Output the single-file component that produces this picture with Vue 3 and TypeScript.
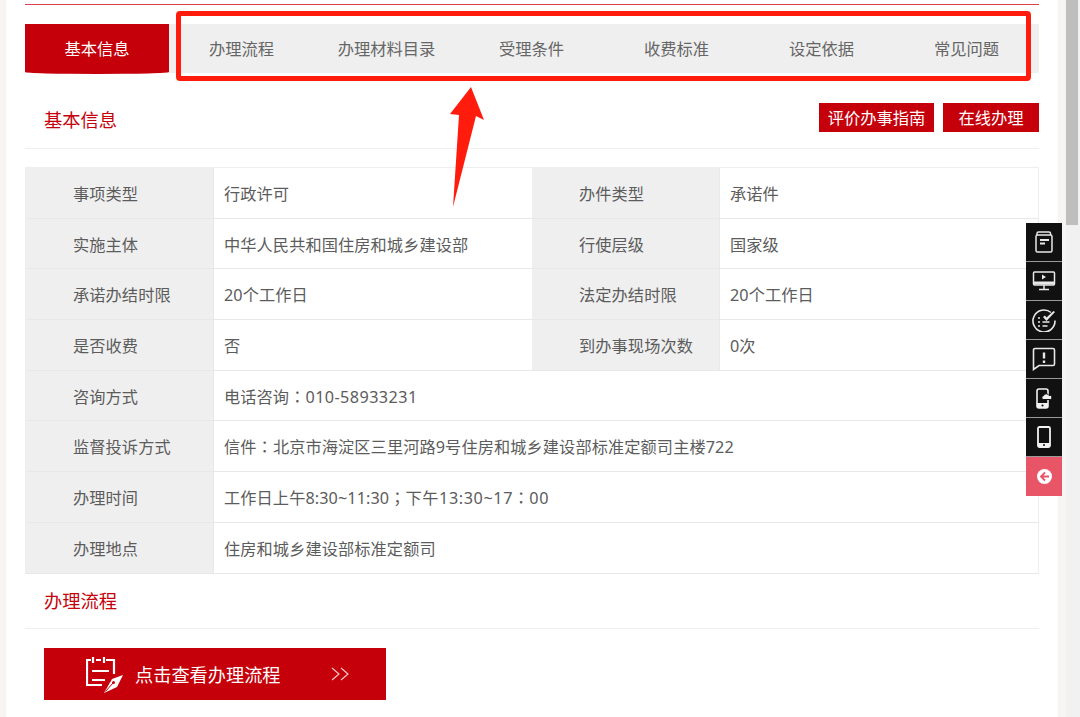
<script setup lang="ts">
const tabs = ['办理流程', '办理材料目录', '受理条件', '收费标准', '设定依据', '常见问题']

interface Row {
  label: string
  value: string
  label2?: string
  value2?: string
}

const rows: Row[] = [
  { label: '事项类型', value: '行政许可', label2: '办件类型', value2: '承诺件' },
  { label: '实施主体', value: '中华人民共和国住房和城乡建设部', label2: '行使层级', value2: '国家级' },
  { label: '承诺办结时限', value: '20个工作日', label2: '法定办结时限', value2: '20个工作日' },
  { label: '是否收费', value: '否', label2: '到办事现场次数', value2: '0次' },
  { label: '咨询方式', value: '电话咨询：010-58933231' },
  { label: '监督投诉方式', value: '信件：北京市海淀区三里河路9号住房和城乡建设部标准定额司主楼722' },
  { label: '办理时间', value: '工作日上午8:30~11:30；下午13:30~17：00' },
  { label: '办理地点', value: '住房和城乡建设部标准定额司' },
]

// full-width colon and semicolon sit centred in the original font
const splitPunct = (s: string) => s.split(/([：；])/)
</script>

<template>
  <div class="page">
    <div class="content">
      <div class="top-line"></div>

      <nav class="tabs">
        <a class="tab active">基本信息</a>
        <div class="tab-list">
          <a v-for="t in tabs" :key="t" class="tab-item">{{ t }}</a>
        </div>
      </nav>

      <header class="section-head first">
        <h2>基本信息</h2>
        <div class="actions">
          <button class="btn wide">评价办事指南</button>
          <button class="btn">在线办理</button>
        </div>
      </header>

      <div class="info-table">
        <div v-for="r in rows" :key="r.label" class="row">
          <div class="cell label">{{ r.label }}</div>
          <div class="cell value" :class="{ full: !r.label2 }">
            <span><span v-for="(p, i) in splitPunct(r.value)" :key="i" :class="{ punct: i % 2 === 1 }">{{ p }}</span></span>
          </div>
          <template v-if="r.label2">
            <div class="cell label">{{ r.label2 }}</div>
            <div class="cell value">{{ r.value2 }}</div>
          </template>
        </div>
      </div>

      <header class="section-head">
        <h2>办理流程</h2>
      </header>

      <a class="flow-btn">
        <svg class="flow-icon" width="38" height="37" viewBox="0 0 38 37" fill="none" stroke="#fff" stroke-width="2.200">
          <path d="M5 3H1v25h15" />
          <path d="M10 3h5M20 3h4M24 3h4v14" />
          <path d="M7 0v6M18 0v6" />
          <path d="M6 14h17M6 23h13" />
          <path d="M37 18L26 22 18 36l13-6z" fill="#fff" stroke="none" />
          <path d="M19.500 34.500L27 26" stroke="#c5000a" stroke-width="1" />
          <circle cx="27.500" cy="25.500" r="1.500" fill="#c5000a" stroke="none" />
        </svg>
        <span>点击查看办理流程</span>
        <svg class="flow-arrows" width="18" height="14" viewBox="0 0 18 14" fill="none" stroke="#f3c6c8" stroke-width="1.200">
          <path d="M1 1l7 6-7 6M10 1l7 6-7 6" />
        </svg>
      </a>
    </div>

    <!-- annotation drawn over the screenshot -->
    <div class="mark-box"></div>
    <svg class="mark-arrow" width="36" height="124" viewBox="0 0 36 124">
      <path d="M21 0L34 33 26 29 3 120 9 28 0 27z" fill="#ff1c0d" />
    </svg>

    <aside class="side">
      <a class="side-item">
        <svg width="18" height="22" viewBox="0 0 18 22" fill="none" stroke="#e8e8e8" stroke-width="1.500">
          <path d="M2 4V2.500C2 1.500 2.500 1 3.500 1H14c1 0 1.500.5 1.500 1.500V4" />
          <rect x="1" y="4" width="16" height="17" rx="1.500" />
          <path d="M5 9h9M5 12.500h5" stroke-width="1.800" />
        </svg>
      </a>
      <a class="side-item">
        <svg width="24" height="20" viewBox="0 0 24 20" fill="none" stroke="#e8e8e8" stroke-width="1.500">
          <rect x="1.500" y="1" width="21" height="13" rx="1" />
          <path d="M1.500 12h21" stroke-width="3" />
          <path d="M7 18.500h10M12 14v4" />
          <path d="M10 3.500l4 2.500-4 2.500z" fill="#e8e8e8" stroke="none" />
        </svg>
      </a>
      <a class="side-item">
        <svg width="24" height="24" viewBox="0 0 24 24" fill="none" stroke="#e8e8e8" stroke-width="1.600">
          <path d="M19 4.500A11 11 0 1 0 23 12.500" />
          <path d="M6 10h2M6 14h2M6 18h2M10.500 14h7M10.500 18h5" />
          <path d="M11 9l2-1.500 1.500 2L21.500 3l1.500 1-8.500 9z" fill="#e8e8e8" stroke="none" />
        </svg>
      </a>
      <a class="side-item">
        <svg width="24" height="24" viewBox="0 0 24 24" fill="none" stroke="#e8e8e8" stroke-width="1.600">
          <path d="M3 1.500h18a1.500 1.500 0 0 1 1.500 1.500v14a1.500 1.500 0 0 1-1.500 1.500H7L1.500 22.500V3A1.500 1.500 0 0 1 3 1.500z" />
          <path d="M12 5.500v6M12 13.500v2.500" stroke-width="2.400" />
        </svg>
      </a>
      <a class="side-item">
        <svg width="16" height="21" viewBox="0 0 16 21" fill="none">
          <rect x="1" y="1" width="11" height="19" rx="2" stroke="#f2f2f2" stroke-width="1.600" />
          <path d="M1 15h11v4a1 1 0 0 1-1 1H2a1 1 0 0 1-1-1z" fill="#f2f2f2" />
          <circle cx="6.500" cy="17.500" r="1.100" fill="#111" />
          <path d="M7 11.500a2 2 0 0 1 .5-3.800A3 3 0 0 1 13 7.500a2 2 0 0 1 1.500 4z" fill="#f2f2f2" stroke="#111" stroke-width="1" />
        </svg>
      </a>
      <a class="side-item">
        <svg width="14" height="22" viewBox="0 0 14 22" fill="none">
          <rect x="1" y="1" width="12" height="20" rx="1.500" stroke="#f2f2f2" stroke-width="1.800" />
          <path d="M1 17h12v3a1 1 0 0 1-1 1H2a1 1 0 0 1-1-1z" fill="#f2f2f2" />
          <circle cx="7" cy="19" r="1" fill="#111" />
        </svg>
      </a>
      <a class="side-item back">
        <svg width="15" height="15" viewBox="0 0 15 15">
          <circle cx="7.500" cy="7.500" r="7.500" fill="#fff" />
          <path d="M8 3.500L4 7.500l4 4M4.500 7.500H12" fill="none" stroke="#e85567" stroke-width="1.800" />
        </svg>
      </a>
    </aside>

    <div class="scrollbar"><div class="thumb"></div></div>
  </div>
</template>

<style scoped>
.page {
  position: relative;
  display: flex;
  height: 717px;
  overflow: hidden;
  background: #f6f5f4;
  font-family: "Noto Sans", "Noto Sans CJK SC", sans-serif;
  color: #5c5c5c;
}
.content {
  width: 1052px;
  margin-left: 6px;
  padding: 0 19px;
  box-sizing: border-box;
  background: #fff;
}
.top-line { height: 1px; margin-top: 4px; background: #e0414f; }
.tabs { display: flex; margin-top: 19px; height: 50px; }
.tab {
  width: 144px;
  height: 50px;
  line-height: 51px;
  text-align: center;
  font-size: 16.300px;
  color: #fff;
  background: #c5000a;
  border-radius: 0 0 50% 50% / 0 0 2px 2px;
}
.tab-list {
  flex: 1;
  display: flex;
  height: 49px;
  background: #efefef;
}
.tab-item { flex: 1; text-align: center; line-height: 50px; font-size: 16.300px; color: #666; }
.section-head {
  display: flex;
  align-items: center;
  justify-content: space-between;
  height: 55px;
  box-sizing: border-box;
  padding-left: 19px;
  border-bottom: 1px solid #eee;
}
.section-head.first { height: 75px; padding-top: 18px; margin-bottom: 18px; }
.section-head h2 { margin: 0 0 2px; font-size: 18.300px; font-weight: 400; color: #c5000a; }
.actions { display: flex; gap: 9px; margin-top: -5px; }
.btn {
  width: 96px;
  height: 29px;
  padding: 0 0 2px;
  border: 0;
  background: #c5000a;
  color: #fff;
  font: inherit;
  font-size: 16.300px;
}
.btn.wide { width: 115px; }
.info-table { border: 1px solid #eee; border-bottom: 0; }
.row { display: flex; height: 50.700px; box-sizing: border-box; border-bottom: 1px solid #e8e8e8; }
.cell { display: flex; align-items: center; font-size: 16.200px; letter-spacing: .1px; }
.label {
  width: 188px;
  flex: none;
  padding-left: 47px;
  box-sizing: border-box;
  background: #efefef;
  border-right: 1px solid #e8e8e8;
}
.value { width: 318px; flex: none; padding-left: 10px; box-sizing: border-box; }
.value:last-child { flex: 1; width: auto; }
.value.full { flex: 1; }
.punct { font-family: "Noto Sans CJK TC", sans-serif; }
/* numbers ran a little wider in the original font */
.row:nth-child(5) .punct + span { letter-spacing: .42px; }
.row:nth-child(7) .punct + span { letter-spacing: .6px; }
.flow-btn {
  display: flex;
  align-items: center;
  width: 342px;
  height: 52px;
  margin: 19.500px 0 0 19px;
  padding-left: 42px;
  box-sizing: border-box;
  background: #c5000a;
  color: #fff;
  font-size: 18.200px;
}
.flow-icon { margin: 2px 11px 0 0; }
.flow-arrows { margin-left: 50px; }
.mark-box {
  position: absolute;
  left: 176px;
  top: 11px;
  width: 855px;
  height: 70px;
  box-sizing: border-box;
  border: 5px solid #ff1c0d;
  border-radius: 4px;
}
.mark-arrow { position: absolute; left: 450px; top: 87px; }
.side {
  position: absolute;
  left: 1026px;
  top: 223px;
  width: 36px;
  display: flex;
  flex-direction: column;
}
.side-item {
  display: flex;
  align-items: center;
  justify-content: center;
  height: 39px;
  box-sizing: border-box;
  background: #111;
  border-bottom: 1px solid #999;
}
.side-item.back { background: #e85567; border-bottom: 0; }
.scrollbar {
  position: absolute;
  right: 0;
  top: 0;
  width: 14px;
  height: 717px;
  background: #f1f1f1;
}
.thumb { width: 12px; height: 225px; background: #bebebe; }
</style>
